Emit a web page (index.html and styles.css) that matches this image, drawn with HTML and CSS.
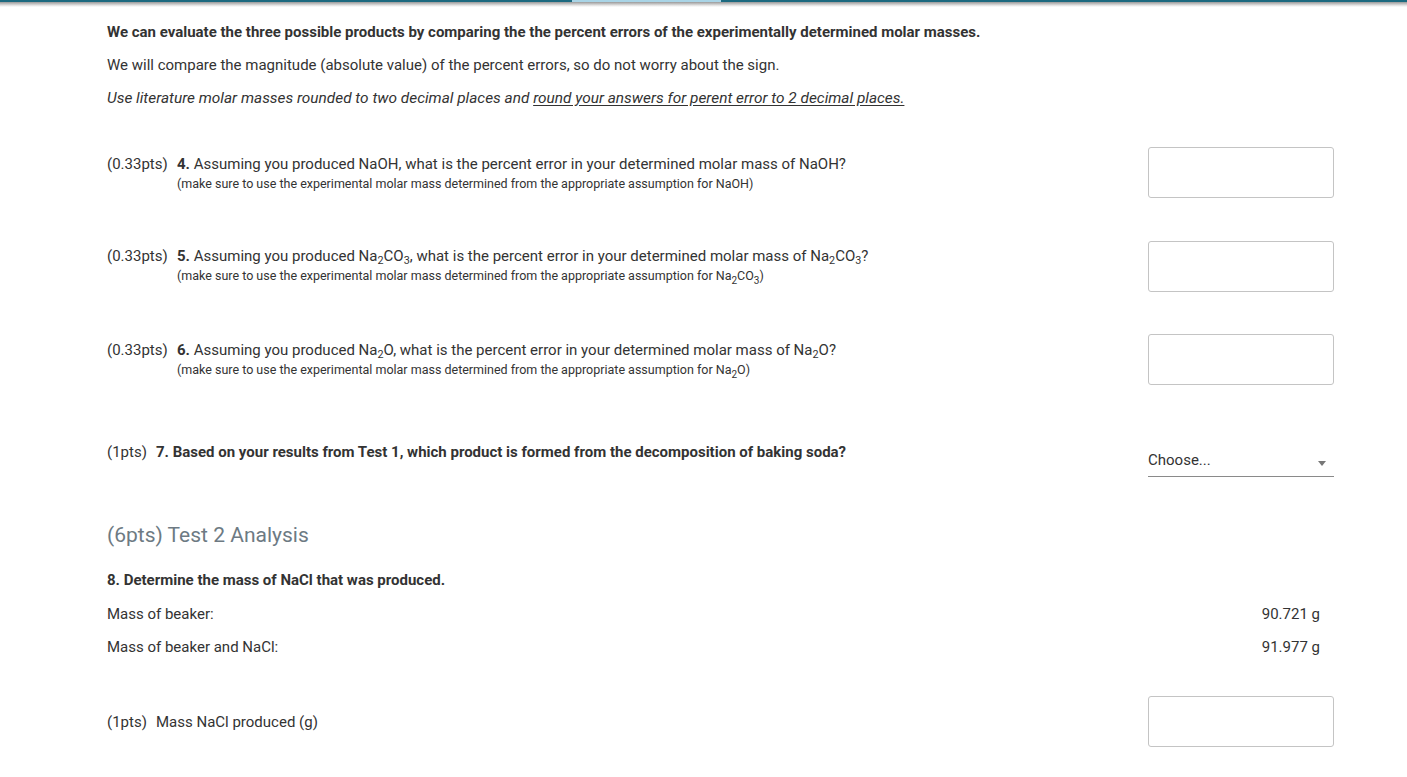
FILE: index.html
```html
<!DOCTYPE html>
<html>
<head>
<meta charset="utf-8">
<link rel="stylesheet" href="styles.css">
</head>
<body>
<div class="topbar"><div class="topbar-mark"></div></div>
<div class="shadow"></div>
<main class="page">
  <p class="intro bold">We can evaluate the three possible products by comparing the the percent errors of the experimentally determined molar masses.</p>
  <p class="intro">We will compare the magnitude (absolute value) of the percent errors, so do not worry about the sign.</p>
  <p class="intro italic">Use literature molar masses rounded to two decimal places and <u>round your answers for perent error to 2 decimal places.</u></p>

  <div class="qrow q4">
    <div class="qtext">
      <div class="qmain"><span class="pts">(0.33pts)</span><span><b>4.</b> Assuming you produced NaOH, what is the percent error in your determined molar mass of NaOH?</span></div>
      <div class="note">(make sure to use the experimental molar mass determined from the appropriate assumption for NaOH)</div>
    </div>
    <div class="inputbox"></div>
  </div>

  <div class="qrow q5">
    <div class="qtext">
      <div class="qmain"><span class="pts">(0.33pts)</span><span><b>5.</b> Assuming you produced Na<sub>2</sub>CO<sub>3</sub>, what is the percent error in your determined molar mass of Na<sub>2</sub>CO<sub>3</sub>?</span></div>
      <div class="note">(make sure to use the experimental molar mass determined from the appropriate assumption for Na<sub>2</sub>CO<sub>3</sub>)</div>
    </div>
    <div class="inputbox"></div>
  </div>

  <div class="qrow q6">
    <div class="qtext">
      <div class="qmain"><span class="pts">(0.33pts)</span><span><b>6.</b> Assuming you produced Na<sub>2</sub>O, what is the percent error in your determined molar mass of Na<sub>2</sub>O?</span></div>
      <div class="note">(make sure to use the experimental molar mass determined from the appropriate assumption for Na<sub>2</sub>O)</div>
    </div>
    <div class="inputbox"></div>
  </div>

  <div class="qrow q7">
    <div class="qmain"><span class="pts pts-small">(1pts)</span><b>7. Based on your results from Test 1, which product is formed from the decomposition of baking soda?</b></div>
    <div class="select"><span>Choose...</span><span class="caret"></span></div>
  </div>

  <h2 class="section">(6pts) Test 2 Analysis</h2>
  <p class="intro bold q8">8. Determine the mass of NaCl that was produced.</p>
  <div class="datarow"><span>Mass of beaker:</span><span class="val">90.721 g</span></div>
  <div class="datarow"><span>Mass of beaker and NaCl:</span><span class="val">91.977 g</span></div>

  <div class="qrow q9">
    <div class="qmain"><span class="pts pts-small">(1pts)</span><span>Mass NaCl produced (g)</span></div>
    <div class="inputbox"></div>
  </div>
</main>
</body>
</html>
```

FILE: styles.css
```css
html, body {
  margin: 0;
  padding: 0;
  background: #fff;
}
body {
  font-family: Roboto, "Liberation Sans", sans-serif;
  color: #333;
  width: 1407px;
  height: 777px;
  overflow: hidden;
}
.topbar {
  height: 2px;
  background: #1c6a80;
  position: relative;
}
.topbar-mark {
  position: absolute;
  left: 572px;
  width: 149px;
  top: 0;
  height: 2px;
  background: #a9d4e6;
}
.shadow {
  height: 5px;
  background: linear-gradient(#9a9a9a, #e6e6e6 70%, #fff);
}
.page {
  padding: 0 73px 0 107px;
  width: 1227px;
}
.intro {
  margin: 0;
  font-size: 15px;
  line-height: 33px;
}
.intro:first-child {
  margin-top: 9px;
}
.bold { font-weight: 700; }
.italic { font-style: italic; font-size: 15.4px; }
.intro u { text-underline-offset: 2px; }

.qrow {
  display: flex;
  justify-content: space-between;
  align-items: flex-start;
}
.q4 { margin-top: 32px; }
.q5 { margin-top: 43px; }
.q6 { margin-top: 42px; }
.qtext { padding-top: 7px; }
.q5 .qtext { padding-top: 5px; }
.q6 .qtext { padding-top: 6px; }
.qmain {
  font-size: 15px;
  line-height: 20px;
  display: flex;
}
.pts { width: 70px; flex: none; }
.pts-small { width: 49px; }
.note {
  font-size: 12.5px;
  line-height: 18px;
  margin-left: 70px;
  margin-top: 1px;
}
sub {
  font-size: 0.72em;
  vertical-align: -0.25em;
  line-height: 0;
}
.note sub { font-size: 0.8em; vertical-align: -0.35em; }
.inputbox {
  width: 184px;
  height: 49px;
  border: 1px solid #c4c4c4;
  border-radius: 3px;
  flex: none;
}
.q7 {
  margin-top: 57px;
}
.select {
  margin-top: 10px;
  width: 186px;
  height: 24px;
  border-bottom: 1px solid #8a8a8a;
  display: flex;
  justify-content: space-between;
  align-items: flex-start;
  font-size: 15px;
  line-height: 17px;
  flex: none;
}
.caret {
  width: 0;
  height: 0;
  border-left: 4.5px solid transparent;
  border-right: 4.5px solid transparent;
  border-top: 5px solid #777;
  margin: 9px 8px 0 0;
}
.section {
  margin: 45px 0 0;
  font-size: 21px;
  font-weight: 400;
  color: #6d7a83;
  line-height: 26px;
}
.q8 { margin-top: 16px; margin-bottom: 1px; }
.datarow {
  display: flex;
  justify-content: space-between;
  font-size: 15px;
  line-height: 33px;
  padding-right: 14px;
}
.q9 {
  margin-top: 32px;
  align-items: center;
}
```
